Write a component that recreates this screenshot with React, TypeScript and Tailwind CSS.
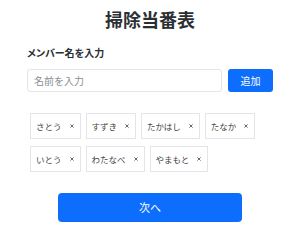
import { useState } from "react";

const initialMembers = [
  "さとう",
  "すずき",
  "たかはし",
  "たなか",
  "いとう",
  "わたなべ",
  "やまもと",
];

function MemberChip({ name, onRemove }: { name: string; onRemove: () => void }) {
  return (
    <div className="flex h-[26px] items-center border border-[#e3e5e8] bg-white pl-[5px] pr-[6px] text-[8.5px] text-[#444]">
      <span>{name}</span>
      <button
        type="button"
        onClick={onRemove}
        className="ml-[8px] flex h-[4px] w-[4px] items-center justify-center"
        aria-label="削除"
      >
        <svg viewBox="0 0 10 10" className="h-[4px] w-[4px]">
          <path d="M1 1L9 9M9 1L1 9" stroke="#555" strokeWidth="2.2" />
        </svg>
      </button>
    </div>
  );
}

export default function App() {
  const [members, setMembers] = useState<string[]>(initialMembers);
  const [name, setName] = useState("");

  function handleAdd() {
    if (name.trim() === "") return;
    setMembers([...members, name.trim()]);
    setName("");
  }

  return (
    <div
      className="h-[234px] w-[300px] bg-white px-[27px] pt-[7px] text-[#2b2f33]"
      style={{ fontFamily: '"Noto Sans CJK JP", "Noto Sans", sans-serif' }}
    >
      <h1 className="text-center text-[18px] font-bold leading-[24px]">掃除当番表</h1>

      <div className="mt-[15px] text-[10px] font-bold leading-[14px] [font-feature-settings:'palt']">
        メンバー名を入力
      </div>

      <div className="mt-[9px] flex gap-[6px]">
        <input
          type="text"
          value={name}
          placeholder="名前を入力"
          onChange={(e) => setName(e.target.value)}
          className="h-[23px] flex-1 rounded-[3px] border border-[#e3e5e8] px-[6px] text-[10px] outline-none placeholder:text-[#8a8f94]"
        />
        <button
          type="button"
          onClick={handleAdd}
          className="h-[23px] w-[45px] rounded-[3px] bg-[#0d6efd] text-[10px] text-white"
        >
          追加
        </button>
      </div>

      <div className="mt-[21px] flex flex-wrap gap-x-[5px] gap-y-[7px] pl-[3px] pr-[10px]">
        {members.map((m, idx) => (
          <MemberChip
            key={`${m}-${idx}`}
            name={m}
            onRemove={() => setMembers(members.filter((_, i) => i !== idx))}
          />
        ))}
      </div>

      <div className="mt-[21px] flex justify-center">
        <button
          type="button"
          className="h-[29px] w-[184px] rounded-[4px] bg-[#0d6efd] text-[11px] text-white"
        >
          次へ
        </button>
      </div>
    </div>
  );
}
